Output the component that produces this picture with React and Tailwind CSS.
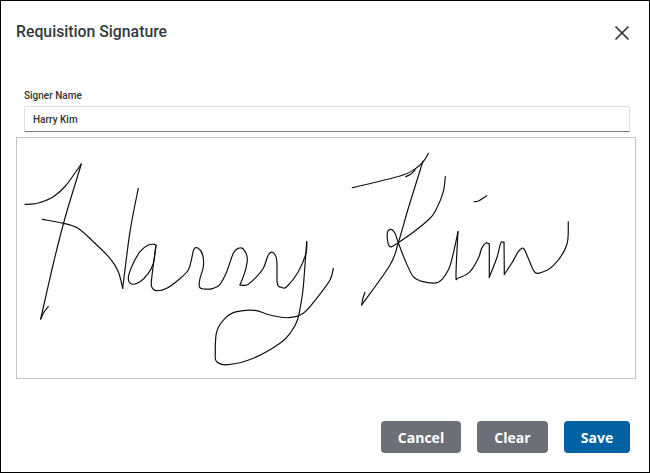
import { X } from "lucide-react";

// pen strokes of the signature, in page coordinates; every cusp starts a new stroke
const strokes = [
  [[25, 204.3], [31, 204.2], [40, 202.5], [53, 197], [65, 186.5], [75, 173], [81.3, 164]],
  [[81.3, 164], [65, 218], [53, 265], [40.7, 319]],
  [[40.7, 319], [44, 312], [48.3, 306.7]],
  [[42.3, 219.3], [63.3, 223.3], [78.3, 228.5], [93.3, 241.7], [110, 258.3], [118.3, 271.7], [122.7, 288.3]],
  [[122.7, 288.3], [130, 231.7], [138.3, 188.3]],
  [[155, 244.3], [148.3, 245], [140, 251.7], [131.7, 266.7], [128.3, 278.3], [131.7, 284], [140, 281.7], [148.3, 273.3], [153.3, 263.3], [156, 245]],
  [[156, 245], [151.7, 278.3], [151.7, 286.7], [156.7, 290.7], [166.7, 288.3], [178.3, 280], [188.3, 270], [191.7, 258.3], [194, 249], [198.3, 248.3], [202.7, 255], [203.3, 266.7], [200, 278.3], [199.3, 286.7], [203.3, 289], [213.3, 288.3], [220, 284.3], [226.7, 271.7], [233.3, 253.3], [238.3, 248.3], [243.3, 249], [247.3, 258.3], [245, 271.7], [240, 285]],
  [[240, 285], [246.7, 285], [255, 278.3], [263.3, 268.3], [268.3, 255], [272.7, 252.3], [276.7, 260], [277.3, 283.3], [281.7, 287.3], [286.7, 286.7], [298.3, 271.7], [306, 253.3], [306.7, 241.7]],
  [[306.7, 241.7], [303.3, 286.7], [300.5, 306], [297.5, 320], [291, 332], [280, 343.3], [253.3, 358.3], [228.3, 364.7], [216.7, 361.7], [215.3, 353.3], [216.7, 331.7], [225, 318.3], [236.7, 311.7], [255, 310.3], [270, 315], [288.3, 317.7], [303.3, 313.3], [316.7, 298.3], [330, 280], [333.3, 268.3]],
  [[352.3, 187.7], [400, 176], [415, 169], [423.3, 161.7], [428.3, 153.3]],
  [[405.7, 176.7], [411, 174], [415, 170]],
  [[423, 161], [408.3, 208.3], [398.3, 242.7], [390, 265], [361.7, 305]],
  [[361.7, 305], [363, 298], [365, 292.3]],
  [[445.3, 176.7], [443.3, 191.7], [436.7, 208.3], [428.3, 220], [398.3, 242.7], [389.3, 246], [387.3, 233.3], [391, 229.3], [395, 233.3], [398.3, 242.7], [405, 260], [413.3, 276.7], [423.3, 281.7], [438.3, 282.3], [448.3, 270], [453.3, 253.3], [458, 231.7]],
  [[458, 231.7], [456, 275], [458.3, 278], [470, 271.7], [478.3, 258.3], [481.7, 248.3], [486, 243], [489.3, 244]],
  [[489.3, 244], [489.3, 277.3]],
  [[489.3, 277.3], [496.7, 258.3], [500.7, 243.3], [504, 242.3]],
  [[504, 242.3], [504.3, 274.3]],
  [[504.3, 274.3], [511.7, 263.3], [518.3, 251.7], [523.3, 248.3], [528.3, 258.3], [533.3, 270], [538.3, 273.3], [553.3, 265.7], [566.7, 245], [568.3, 221.7]],
  [[474.3, 201.7], [478.3, 201], [486.7, 195.7]],
];

// catmull-rom through the points
const toPath = (pts) => {
  let d = `M${pts[0][0]} ${pts[0][1]}`;
  for (let i = 0; i < pts.length - 1; i++) {
    const p0 = pts[i - 1] || pts[i];
    const p1 = pts[i];
    const p2 = pts[i + 1];
    const p3 = pts[i + 2] || p2;
    const c1x = p1[0] + (p2[0] - p0[0]) / 6;
    const c1y = p1[1] + (p2[1] - p0[1]) / 6;
    const c2x = p2[0] - (p3[0] - p1[0]) / 6;
    const c2y = p2[1] - (p3[1] - p1[1]) / 6;
    d += ` C${c1x.toFixed(1)} ${c1y.toFixed(1)} ${c2x.toFixed(1)} ${c2y.toFixed(1)} ${p2[0]} ${p2[1]}`;
  }
  return d;
};

export default function App() {
  return (
    <div className="w-[650px] h-[473px] border border-black bg-white flex flex-col font-['Roboto',sans-serif] overflow-hidden">
      {/* Header */}
      <div className="flex items-center justify-between h-[60px] pl-[15px] pr-[15px] shrink-0">
        <h2 className="mt-[1px] text-[15.8px] font-medium text-[#333a40]">Requisition Signature</h2>
        <button type="button" className="mt-[3px] text-[#333]">
          <X className="w-[24px] h-[24px]" strokeWidth={1.7} />
        </button>
      </div>

      {/* Signer name */}
      <div className="px-[23px] mt-[28px] shrink-0">
        <label htmlFor="signer" className="block text-[10px] font-medium leading-[14px] text-[#333]">
          Signer Name
        </label>
        <input
          id="signer"
          type="text"
          readOnly
          value="Harry Kim"
          className="block w-[606px] h-[26px] mt-[3px] pl-[8px] text-[10px] font-medium text-[#333] border border-[#e0e0e0] border-b-[#777] rounded-t-[3px] outline-none"
        />
      </div>

      {/* Signature pad */}
      <div className="ml-[15px] mt-[5px] w-[620px] h-[242px] border border-[#c4c4c4] shrink-0">
        <svg viewBox="17 138 618 240" className="block w-[618px] h-[240px]" fill="none" stroke="#111" strokeWidth="1.2" strokeLinecap="round" strokeLinejoin="round">
          {strokes.map((pts, i) => (
            <path key={i} d={toPath(pts)} />
          ))}
        </svg>
      </div>

      {/* Footer */}
      <div className="flex justify-end gap-4 mt-[42px] pr-[19px] font-['Open_Sans',sans-serif] text-[14px] font-bold text-white">
        <button type="button" className="w-[80px] h-[32px] rounded-[4px] bg-[#6c6f78]">Cancel</button>
        <button type="button" className="w-[71px] h-[32px] rounded-[4px] bg-[#6c6f78]">Clear</button>
        <button type="button" className="w-[66px] h-[32px] rounded-[4px] bg-[#0061a3]">Save</button>
      </div>
    </div>
  );
}
